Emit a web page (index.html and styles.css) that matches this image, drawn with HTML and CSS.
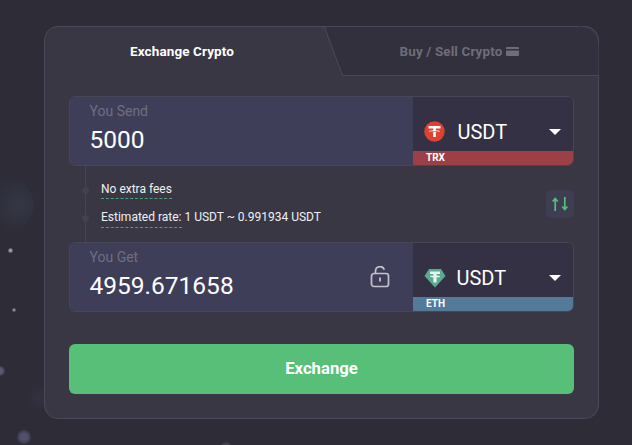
FILE: index.html
```html
<!DOCTYPE html>
<html lang="en">
<head>
<meta charset="utf-8">
<title>Exchange Crypto</title>
<link rel="stylesheet" href="styles.css">
</head>
<body>
<div class="sky" aria-hidden="true">
  <i class="glow glow-a"></i>
  <i class="glow glow-b"></i>
  <i class="star star-a"></i>
  <i class="star star-b"></i>
  <i class="star star-c"></i>
  <i class="star star-d"></i>
  <i class="star star-e"></i>
</div>
<main class="card">
  <div class="tabs">
    <svg class="tab-shape" width="555" height="50" viewBox="0 0 555 50" aria-hidden="true">
      <path class="tab-fill" d="M284 0.5H535a19.5 19.5 0 0 1 19.5 19.5V49.5H298.5L283 6Q282 0.500 284 0.5Z"/>
      <path class="tab-line" d="M20 0.5H276Q280 0.5 281.500 4L298.5 49.5H554.5"/>
      <path class="tab-line" d="M283 0.500H535"/>
    </svg>
    <div class="tab tab-active">Exchange Crypto</div>
    <div class="tab tab-muted">Buy / Sell Crypto
      <svg class="card-icon" width="13" height="9" viewBox="0 0 13 9" aria-hidden="true">
        <path d="M1 0h11a1 1 0 0 1 1 1v1H0V1a1 1 0 0 1 1-1ZM0 3.500h13V8a1 1 0 0 1-1 1H1a1 1 0 0 1-1-1Z"/>
      </svg>
    </div>
  </div>
  <div class="body">
    <section class="field">
      <div class="amount">
        <div class="label">You Send</div>
        <div class="value">5000</div>
      </div>
      <div class="picker">
        <div class="coin">
          <svg class="coin-icon" width="21" height="21" viewBox="0 0 21 21" aria-hidden="true">
            <circle cx="10.500" cy="10.500" r="10.200" fill="#dd4132"/>
            <path d="M4.500 5h12v2.500h-4.700v1.700c2.300.1 4.200.5 4.200 1s-1.900.9-4.200 1V16H9.200v-4.800c-2.300-.1-4.200-.5-4.200-1s1.900-.9 4.200-1V7.500H4.500Z" fill="#fff"/>
            <path d="M6 10c1 .4 2.800.6 4.500.6s3.500-.2 4.500-.6" fill="none" stroke="#dd4132" stroke-width=".8"/>
          </svg>
          <span class="ticker">USDT</span>
          <i class="caret"></i>
        </div>
        <div class="net net-trx">TRX</div>
      </div>
    </section>
    <section class="info">
      <ul class="facts">
        <li class="fact"><span class="fact-line"><span class="dash">No extra fees</span></span></li>
        <li class="fact"><span class="fact-line"><span class="dash">Estimated rate:</span> 1 USDT ~ 0.991934 USDT</span></li>
      </ul>
      <div class="swap">
        <svg width="16" height="14" viewBox="0 0 16 14" aria-hidden="true">
          <path d="M3.200 14V1.500M.6 4.500l2.600-3 2.600 3M12.800 0v12.500M10.200 9.500l2.600 3 2.600-3" fill="none" stroke="#57bf77" stroke-width="1.700"/>
        </svg>
      </div>
    </section>
    <section class="field">
      <div class="amount amount-lock">
        <div>
          <div class="label">You Get</div>
          <div class="value">4959.671658</div>
        </div>
        <svg class="lock" width="20" height="22" viewBox="0 0 20 22" aria-hidden="true">
          <rect x="1.500" y="7.500" width="17" height="13" rx="2.500" fill="none" stroke="#c3c2c9" stroke-width="1.700"/>
          <path d="M5.500 7.500V5a4.500 4.500 0 0 1 8.800-1.200" fill="none" stroke="#c3c2c9" stroke-width="1.700"/>
          <path d="M10 11.500v4" stroke="#c3c2c9" stroke-width="1.800"/>
        </svg>
      </div>
      <div class="picker">
        <div class="coin coin-eth">
          <svg class="coin-icon" width="22" height="20" viewBox="0 0 22 20" aria-hidden="true">
            <path d="M5 1H17L21.500 8 11 19.500.5 8Z" fill="#5aab90"/>
            <path d="M6 3.500h10v2.400h-3.400v1.700c2 .1 3.500.5 3.500 1s-1.500.9-3.500 1v5H9.400v-5c-2-.1-3.500-.5-3.500-1s1.500-.9 3.500-1V5.900H6Z" fill="#e4f3ee"/>
          </svg>
          <span class="ticker">USDT</span>
          <i class="caret"></i>
        </div>
        <div class="net net-eth">ETH</div>
      </div>
    </section>
    <button class="submit" type="button">Exchange</button>
  </div>
</main>
</body>
</html>
```
FILE: styles.css
```css
* { box-sizing: border-box; }
html, body { height: 100%; }
body {
  margin: 0;
  overflow: hidden;
  position: relative;
  background: #2d2c37;
  font-family: Roboto, "Liberation Sans", sans-serif;
  color: #fff;
  padding: 26px 33px 0 44px;
}
.sky { position: absolute; inset: 0; }
.glow, .star { position: absolute; border-radius: 50%; display: block; }
.glow-a { left: -20px; top: 178px; width: 54px; height: 54px; background: radial-gradient(circle at 72% 50%, #343644 0 6%, #2f303c 40%, #2d2c37 72%); }
.glow-b { left: 26px; top: 385px; width: 26px; height: 26px; background: radial-gradient(circle, #33323f 0, #2d2c37 70%); }
.star-a { left: 8px; top: 248px; width: 5px; height: 5px; background: radial-gradient(circle, #9a9aa5 0 30%, #2d2c37 90%); }
.star-b { left: 12px; top: 308px; width: 4px; height: 4px; background: radial-gradient(circle, #8a8a95 0 30%, #2d2c37 90%); }
.star-c { left: -5px; top: 366px; width: 10px; height: 10px; background: radial-gradient(circle, #5b5a70 0 30%, #2d2c37 90%); }
.star-d { left: 17px; top: 430px; width: 14px; height: 14px; background: radial-gradient(circle, #52516a 0 30%, #2d2c37 90%); }
.star-e { left: 220px; top: 442px; width: 12px; height: 12px; background: radial-gradient(circle, #4b4a5b 0 30%, #2d2c37 90%); }

.card {
  position: relative;
  width: 555px;
  height: 393px;
  background: #383743;
  border: 1px solid #4a4959;
  border-radius: 14px;
}
.tabs {
  position: relative;
  display: flex;
  height: 50px;
  margin: -1px -1px 0;
}
.tab-shape { position: absolute; left: 0; top: 0; }
.tab-fill { fill: #31303c; }
.tab-line { fill: none; stroke: #4a4959; stroke-width: 1; }
.tab {
  position: relative;
  display: flex;
  align-items: center;
  justify-content: center;
  font-size: 13.500px;
  font-weight: 700;
  letter-spacing: .1px;
}
.tab-active { width: 276px; color: #fff; }
.tab-muted { flex: 1; gap: 4px; color: #6e6d79; }
.card-icon { fill: #6e6d79; margin-top: 1px; }

.body { padding: 20px 24px 0; }
.field {
  display: flex;
  height: 70px;
  border: 1px solid #474659;
  border-radius: 6px;
  overflow: hidden;
}
.amount {
  width: 343px;
  background: #3f3e59;
  padding: 6px 20px 0 19.500px;
}
.amount-lock {
  display: flex;
  justify-content: space-between;
  align-items: flex-start;
  padding-right: 23px;
}
.lock { margin-top: 17px; }
.label { font-size: 14px; line-height: 17px; color: #6f6e80; }
.value { font-size: 24.500px; line-height: 32px; margin-top: 4px; }
.picker {
  flex: 1;
  display: flex;
  flex-direction: column;
  background: #353145;
}
.coin {
  flex: 1;
  display: flex;
  align-items: center;
  padding: 15px 12px 0 11px;
}
.coin-icon { flex: none; }
.ticker { margin-left: 12.500px; font-size: 20px; font-weight: 400; }
.coin-eth .ticker { margin-left: 10.500px; }
.caret {
  margin-left: auto;
  width: 0;
  height: 0;
  border-left: 6px solid transparent;
  border-right: 6px solid transparent;
  border-top: 6px solid #fff;
}
.net {
  height: 14px;
  padding-left: 13px;
  font-size: 10px;
  font-weight: 700;
  line-height: 14px;
}
.net-trx { background: #9c3f46; }
.net-eth { background: #547a9a; }

.info {
  display: flex;
  align-items: flex-start;
  justify-content: space-between;
  height: 76px;
  margin-left: 16px;
  border-left: 1px solid #45444f;
}
.facts { list-style: none; margin: 16px 0 0; padding: 0; }
.fact { position: relative; padding-left: 15px; font-size: 12px; line-height: 15px; color: #f0f0f3; }
.fact + .fact { margin-top: 11px; }
.fact::before {
  content: "";
  position: absolute;
  left: -4px;
  top: 5px;
  width: 7px;
  height: 7px;
  border-radius: 50%;
  background: #42414e;
}
.fact-line { display: block; }
.dash { display: inline-block; padding-bottom: 1px; border-bottom: 1px dashed #4f9f78; }
.fact + .fact .dash { padding-bottom: 2px; }
.swap {
  display: flex;
  align-items: center;
  justify-content: center;
  width: 28px;
  height: 28px;
  margin-top: 24px;
  border-radius: 5px;
  background: #3e3d52;
}
.submit {
  display: block;
  width: 100%;
  height: 50px;
  margin-top: 32px;
  padding: 0 0 2px;
  border: 0;
  border-radius: 6px;
  background: #57bf77;
  color: #fff;
  font: 700 16.700px Roboto, "Liberation Sans", sans-serif;
}
```
